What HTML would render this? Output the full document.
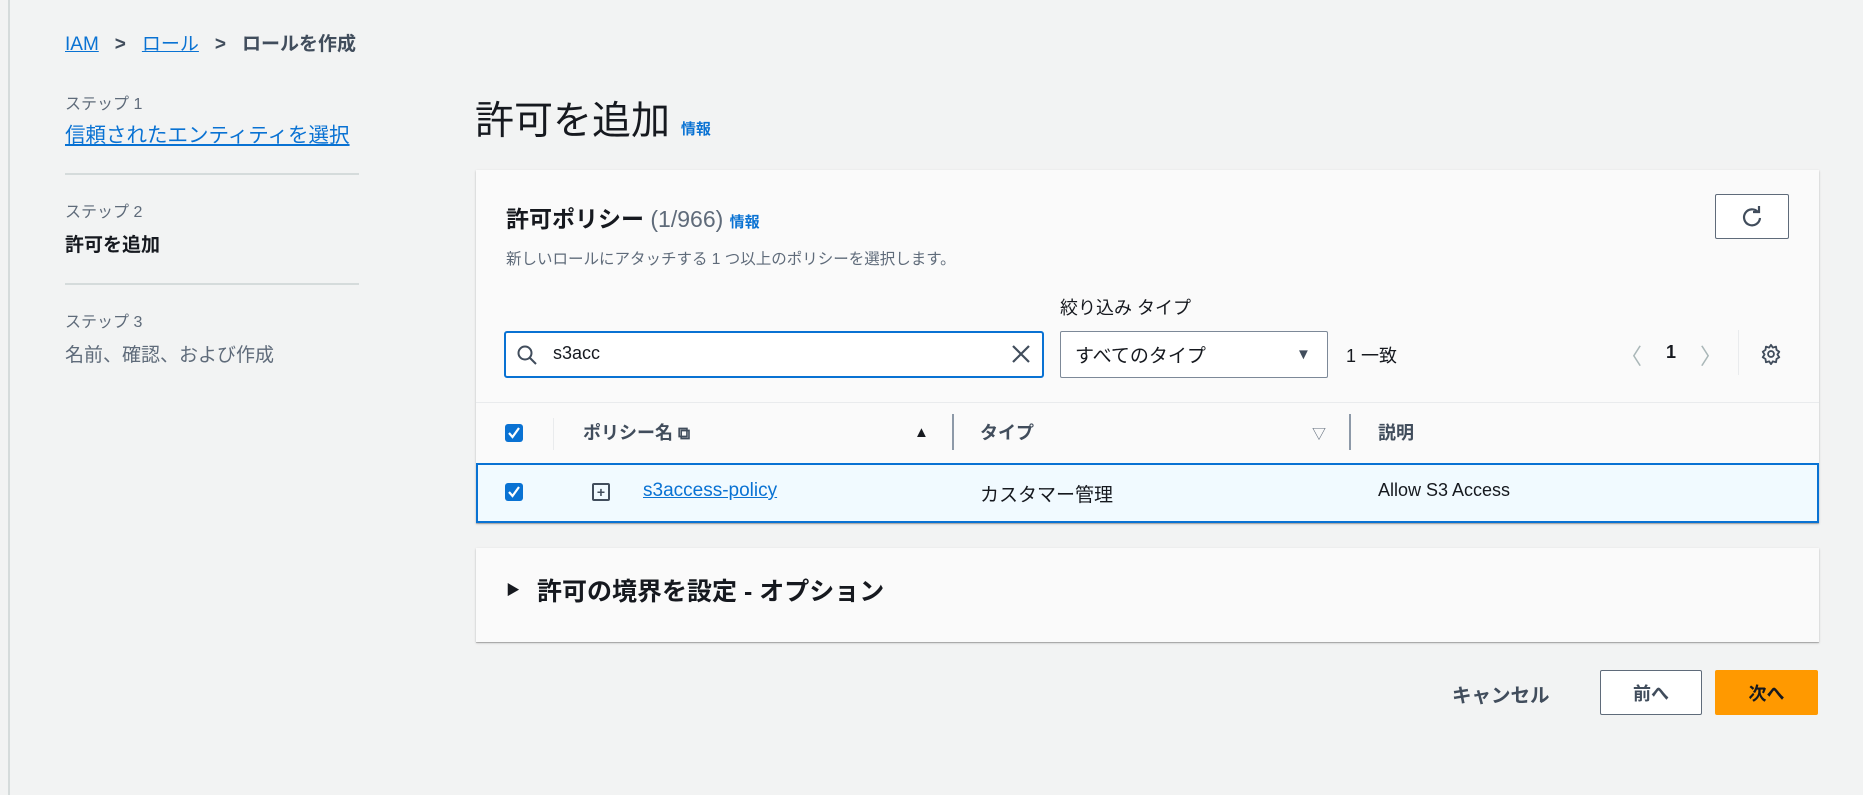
<!DOCTYPE html>
<html><head><meta charset="utf-8"><style>
*{box-sizing:border-box;margin:0;padding:0}
body{width:1863px;height:795px;background:#f2f3f3;font-family:"Liberation Sans","Noto Sans CJK JP",sans-serif;color:#16191f;position:relative;overflow:hidden;font-size:17px}
.a{position:absolute;white-space:nowrap}
.lnk{color:#0972d3;text-decoration:underline}
.grey{color:#5f6b7a}
.card{position:absolute;background:#fafafa;box-shadow:0 1px 2px rgba(0,0,0,.25),0 1px 0 rgba(0,0,0,.15)}
.cb{position:absolute;width:18px;height:18px;background:#0972d3;border-radius:3px}
.cb svg{position:absolute;left:2px;top:2px}
.btn{position:absolute;border:1.5px solid #5f6b7a;background:#fff;border-radius:2px;display:flex;align-items:center;justify-content:center;font-weight:bold}
</style></head><body>
<div class="a" style="left:8px;top:0;width:2px;height:795px;background:#d5dbdb"></div>
<div class="a" style="left:65px;top:29px;font-size:19px"><span class="lnk">IAM</span><span style="margin:0 16px;color:#414d5c;font-weight:bold">&gt;</span><span class="lnk">ロール</span><span style="margin:0 16px;color:#414d5c;font-weight:bold">&gt;</span><span style="font-weight:bold;color:#414d5c">ロールを作成</span></div>
<div class="a grey" style="left:65px;top:90px;font-size:16px">ステップ 1</div>
<div class="a lnk" style="left:65px;top:118px;font-size:20.5px">信頼されたエンティティを選択</div>
<div class="a" style="left:65px;top:173px;width:294px;height:2px;background:#d5dbdb"></div>
<div class="a grey" style="left:65px;top:198px;font-size:16px">ステップ 2</div>
<div class="a" style="left:65px;top:230px;font-size:19px;font-weight:bold">許可を追加</div>
<div class="a" style="left:65px;top:283px;width:294px;height:2px;background:#d5dbdb"></div>
<div class="a grey" style="left:65px;top:308px;font-size:16px">ステップ 3</div>
<div class="a grey" style="left:65px;top:340px;font-size:19px">名前、確認、および作成</div>

<div class="a" style="left:475px;top:90px;font-size:39px">許可を追加 <span style="font-size:15px;color:#0972d3;font-weight:bold">情報</span></div>

<div class="card" style="left:476px;top:170px;width:1343px;height:353px"></div>
<div class="a" style="left:506px;top:200px;font-size:23px;font-weight:bold">許可ポリシー <span style="font-weight:normal;color:#5f6b7a">(1/966)</span> <span style="font-size:15px;color:#0972d3">情報</span></div>
<div class="a grey" style="left:506px;top:247px;font-size:15.5px">新しいロールにアタッチする 1 つ以上のポリシーを選択します。</div>
<div class="btn" style="left:1715px;top:194px;width:74px;height:45px"><svg width="22" height="22" viewBox="0 0 22 22"><path d="M17 6A8 8 0 1 0 19 12" fill="none" stroke="#414d5c" stroke-width="2.2"/><path d="M12 6h6V0" fill="none" stroke="#414d5c" stroke-width="2.2"/></svg></div>
<div class="a" style="left:1060px;top:294px;font-size:18px">絞り込み タイプ</div>
<div class="a" style="left:504px;top:331px;width:540px;height:47px;border:2px solid #0972d3;border-radius:3px;background:#fff"></div>
<svg class="a" style="left:516px;top:344px" width="22" height="22" viewBox="0 0 22 22"><circle cx="9" cy="9" r="6.5" fill="none" stroke="#414d5c" stroke-width="2"/><path d="M14 14l6 6" stroke="#414d5c" stroke-width="2"/></svg>
<div class="a" style="left:553px;top:343px;font-size:18px">s3acc</div>
<svg class="a" style="left:1011px;top:344px" width="20" height="20" viewBox="0 0 20 20"><path d="M2 2l16 16M18 2L2 18" stroke="#414d5c" stroke-width="2.2"/></svg>
<div class="a" style="left:1060px;top:331px;width:268px;height:47px;border:1.5px solid #7d8998;border-radius:2px;background:#fff"></div>
<div class="a" style="left:1075px;top:341px;font-size:19px">すべてのタイプ</div>
<div class="a" style="left:1296px;top:346px;font-size:15px;color:#414d5c">▼</div>
<div class="a" style="left:1346px;top:342px;font-size:18px">1 一致</div>
<div class="a" style="left:1620px;top:339px;font-size:22px;color:#aab7b8">〈</div>
<div class="a" style="left:1666px;top:342px;font-size:18px;font-weight:bold">1</div>
<div class="a" style="left:1700px;top:339px;font-size:22px;color:#aab7b8">〉</div>
<div class="a" style="left:1738px;top:330px;width:1px;height:45px;background:#e9ebed"></div>
<svg class="a" style="left:1760px;top:343px" width="22" height="22" viewBox="0 0 24 24"><path d="M12 2l2 3 3.5-1 .5 3.5 3 2-2 3 2 3-3 2-.5 3.5-3.5-1-2 3-2-3-3.5 1-.5-3.5-3-2 2-3-2-3 3-2 .5-3.5 3.5 1z" fill="none" stroke="#414d5c" stroke-width="2" stroke-linejoin="round"/><circle cx="12" cy="12" r="3.2" fill="none" stroke="#414d5c" stroke-width="2"/></svg>

<div class="a" style="left:476px;top:402px;width:1343px;height:1px;background:#e9ebed"></div>
<div class="cb" style="left:505px;top:424px"><svg width="14" height="14" viewBox="0 0 14 14"><path d="M2 7l3.5 4L12 2" fill="none" stroke="#fff" stroke-width="2.2"/></svg></div>
<div class="a" style="left:553px;top:418px;width:1px;height:32px;background:#e9ebed"></div>
<div class="a" style="left:583px;top:419px;font-size:18px;font-weight:bold;color:#414d5c">ポリシー名 <span style="font-size:17px">⧉</span></div>
<div class="a" style="left:914px;top:424px;font-size:15px">▲</div>
<div class="a" style="left:952px;top:414px;width:2px;height:36px;background:#8d99a8"></div>
<div class="a" style="left:980px;top:419px;font-size:18px;font-weight:bold;color:#414d5c">タイプ</div>
<div class="a" style="left:1312px;top:424px;font-size:14px;color:#5f6b7a">▽</div>
<div class="a" style="left:1349px;top:414px;width:2px;height:36px;background:#8d99a8"></div>
<div class="a" style="left:1378px;top:419px;font-size:18px;font-weight:bold;color:#414d5c">説明</div>

<div class="a" style="left:476px;top:463px;width:1343px;height:60px;background:#f1faff;border:2px solid #0972d3"></div>
<div class="cb" style="left:505px;top:483px"><svg width="14" height="14" viewBox="0 0 14 14"><path d="M2 7l3.5 4L12 2" fill="none" stroke="#fff" stroke-width="2.2"/></svg></div>
<div class="a" style="left:592px;top:483px;width:18px;height:18px;border:2px solid #414d5c;border-radius:2px;font-size:14px;line-height:14px;text-align:center;font-weight:bold;color:#414d5c">+</div>
<div class="a lnk" style="left:643px;top:480px;font-size:19px">s3access-policy</div>
<div class="a" style="left:980px;top:480px;font-size:19px">カスタマー管理</div>
<div class="a" style="left:1378px;top:480px;font-size:18px">Allow S3 Access</div>

<div class="card" style="left:476px;top:548px;width:1343px;height:94px"></div>
<div class="a" style="left:506px;top:580px;font-size:14px">▶</div>
<div class="a" style="left:537px;top:572px;font-size:25px;font-weight:bold">許可の境界を設定 - オプション</div>

<div class="a" style="left:1452px;top:679px;font-size:19.5px;font-weight:bold;color:#414d5c">キャンセル</div>
<div class="btn" style="left:1600px;top:670px;width:102px;height:45px;font-size:18px;color:#414d5c">前へ</div>
<div class="a" style="left:1715px;top:670px;width:103px;height:45px;background:#ff9900;border-radius:2px;display:flex;align-items:center;justify-content:center;font-weight:bold;font-size:18px">次へ</div>
</body></html>
